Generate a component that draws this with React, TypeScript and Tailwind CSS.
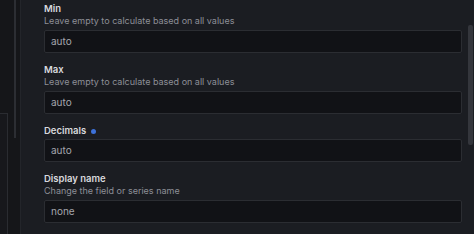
import React from "react";

function Field({ label, desc, value, dot }: { label: string; desc?: string; value: string; dot?: boolean }) {
  return (
    <div className="flex flex-col">
      <div className="flex items-center gap-[5px] h-[12px] text-[9.5px] font-semibold text-[#d8d9dd] leading-[12px]">
        <span>{label}</span>
        {dot && <span className="w-[5px] h-[5px] rounded-full bg-[#3d71d9]" />}
      </div>
      {desc && <div className="h-[12px] text-[9px] text-[#8d8f97] leading-[12px]">{desc}</div>}
      <div
        className={`${desc ? "mt-[3px]" : "mt-[2px]"} h-[23px] w-[418px] rounded-[2px] bg-[#111216] border border-[#2b2d32] flex items-center px-[6px] text-[10px] text-[#a4a6ad]`}
      >
        {value}
      </div>
    </div>
  );
}

export default function App() {
  return (
    <div
      className="w-[474px] h-[234px] flex bg-[#151619] overflow-hidden relative"
      style={{ fontFamily: "Inter, 'Noto Sans', sans-serif" }}
    >
      <div className="w-[20px] h-full relative shrink-0">
        <div className="absolute left-[14px] top-0 w-[2px] h-[138px] bg-[#2c2e33]" />
        <div className="absolute left-0 top-[113px] w-[8px] h-[130px] border-t border-r border-[#2a2c31] bg-[#17181c]" />
      </div>
      <div className="flex-1 h-full bg-[#1b1d22] border-l border-[#23252a] relative">
        <div className="pl-[23px] pt-[3px] flex flex-col gap-[11px]">
          <Field label="Min" desc="Leave empty to calculate based on all values" value="auto" />
          <Field label="Max" desc="Leave empty to calculate based on all values" value="auto" />
          <Field label="Decimals" value="auto" dot />
          <Field label="Display name" desc="Change the field or series name" value="none" />
        </div>
        <div className="absolute right-[1px] top-[25px] w-[5px] h-[120px] rounded-[2px] bg-[#34363c]" />
      </div>
    </div>
  );
}
